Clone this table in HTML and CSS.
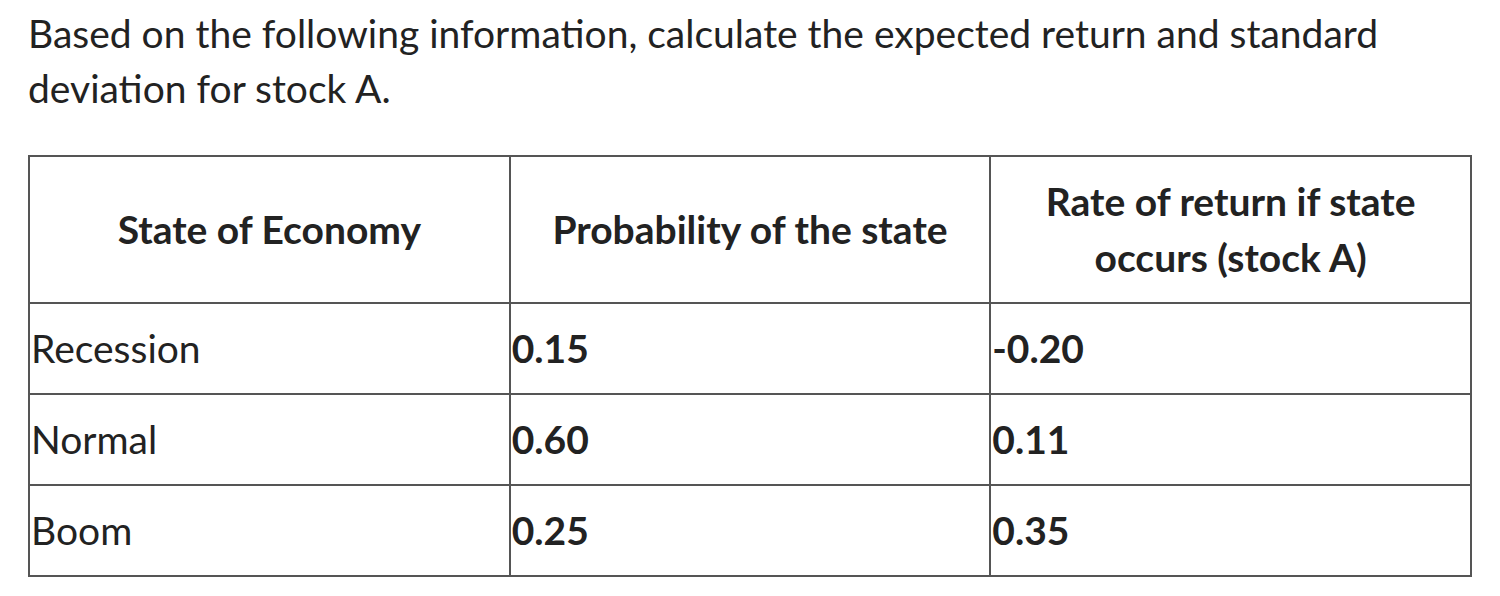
FILE: index.html
```html
<!DOCTYPE html>
<html lang="en">
<head>
    <meta charset="UTF-8">
    <title>Stock A - Expected Return</title>
    <link rel="stylesheet" href="styles.css">
</head>
<body>

<p class="question">Based on the following information, calculate the expected return and standard deviation for stock A.</p>

<table class="states">
    <thead>
        <tr>
            <th>State of Economy</th>
            <th>Probability of the state</th>
            <th>Rate of return if state occurs (stock A)</th>
        </tr>
    </thead>
    <tbody>
        <tr>
            <td>Recession</td>
            <td class="num">0.15</td>
            <td class="num">-0.20</td>
        </tr>
        <tr>
            <td>Normal</td>
            <td class="num">0.60</td>
            <td class="num">0.11</td>
        </tr>
        <tr>
            <td>Boom</td>
            <td class="num">0.25</td>
            <td class="num">0.35</td>
        </tr>
    </tbody>
</table>

</body>
</html>
```

FILE: styles.css
```css
body {
    font-family: Lato, "Open Sans", sans-serif;
    font-size: 39px;
    line-height: 55px;
    color: #222;
    background-color: #fff;
    margin: 0;
    padding: 6px 28px 0;
}
.question {
    margin: 0 0 39px;
}
.states {
    width: 100%;
    border-collapse: collapse;
    table-layout: fixed;
    line-height: 56px;
}
.states th, .states td {
    border: 2px solid #555;
    padding: 16px 1px 17px;
    vertical-align: middle;
}
.states th {
    font-weight: bold;
    text-align: center;
    padding: 16px 40px 17px;
}
.states td {
    text-align: left;
}
.states td.num {
    font-weight: bold;
}
```
